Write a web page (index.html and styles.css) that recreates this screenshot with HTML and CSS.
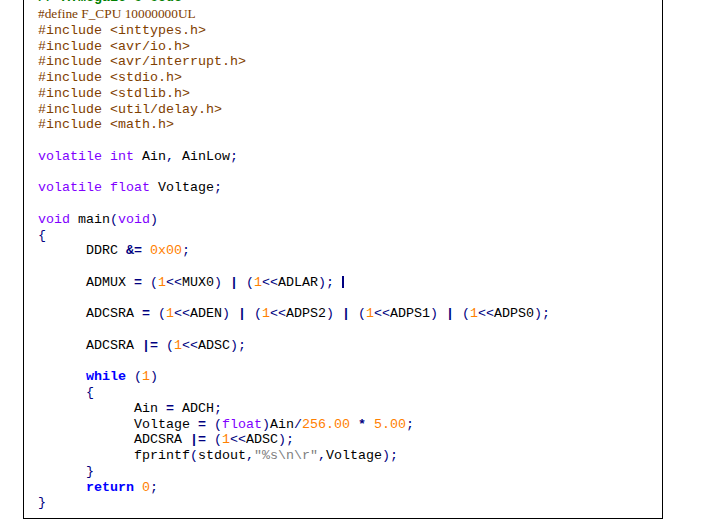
FILE: index.html
```html
<!DOCTYPE html>
<html>
<head>
<meta charset="utf-8">
<link rel="stylesheet" href="styles.css">
</head>
<body>
<div class="doc">
<pre class="code"><span class="cm">// ATmega16 C Code</span>
<span class="def">#define F_CPU 10000000UL</span>
<span class="pp">#include &lt;inttypes.h&gt;</span>
<span class="pp">#include &lt;avr/io.h&gt;</span>
<span class="pp">#include &lt;avr/interrupt.h&gt;</span>
<span class="pp">#include &lt;stdio.h&gt;</span>
<span class="pp">#include &lt;stdlib.h&gt;</span>
<span class="pp">#include &lt;util/delay.h&gt;</span>
<span class="pp">#include &lt;math.h&gt;</span>

<span class="ty">volatile</span> <span class="ty">int</span> Ain<span class="op">,</span> AinLow<span class="op">;</span>

<span class="ty">volatile</span> <span class="ty">float</span> Voltage<span class="op">;</span>

<span class="ty">void</span> main<span class="op">(</span><span class="ty">void</span><span class="op">)</span>
<span class="op">{</span>
	DDRC <span class="ob">&amp;=</span> <span class="nu">0x00</span><span class="op">;</span>

	ADMUX <span class="ob">=</span> <span class="op">(</span><span class="nu">1</span><span class="op">&lt;&lt;</span>MUX0<span class="op">)</span> <span class="ob">|</span> <span class="op">(</span><span class="nu">1</span><span class="op">&lt;&lt;</span>ADLAR<span class="op">);</span> <span class="caret"></span>

	ADCSRA <span class="ob">=</span> <span class="op">(</span><span class="nu">1</span><span class="op">&lt;&lt;</span>ADEN<span class="op">)</span> <span class="ob">|</span> <span class="op">(</span><span class="nu">1</span><span class="op">&lt;&lt;</span>ADPS2<span class="op">)</span> <span class="ob">|</span> <span class="op">(</span><span class="nu">1</span><span class="op">&lt;&lt;</span>ADPS1<span class="op">)</span> <span class="ob">|</span> <span class="op">(</span><span class="nu">1</span><span class="op">&lt;&lt;</span>ADPS0<span class="op">);</span>

	ADCSRA <span class="ob">|=</span> <span class="op">(</span><span class="nu">1</span><span class="op">&lt;&lt;</span>ADSC<span class="op">);</span>

	<span class="kw">while</span> <span class="op">(</span><span class="nu">1</span><span class="op">)</span>
	<span class="op">{</span>
		Ain <span class="ob">=</span> ADCH<span class="op">;</span>
		Voltage <span class="ob">=</span> <span class="op">(</span><span class="ty">float</span><span class="op">)</span>Ain<span class="op">/</span><span class="nu">256.00</span> <span class="ob">*</span> <span class="nu">5.00</span><span class="op">;</span>
		ADCSRA <span class="ob">|=</span> <span class="op">(</span><span class="nu">1</span><span class="op">&lt;&lt;</span>ADSC<span class="op">);</span>
		fprintf<span class="op">(</span>stdout<span class="op">,</span><span class="st">"%s\n\r"</span><span class="op">,</span>Voltage<span class="op">);</span>
	<span class="op">}</span>
	<span class="kw">return</span> <span class="nu">0</span><span class="op">;</span>
<span class="op">}</span></pre>
</div>
</body>
</html>
```

FILE: styles.css
```css
html, body {
  margin: 0;
  padding: 0;
  background: #ffffff;
}

.doc {
  margin-top: -14.6px;
  margin-left: 23px;
  border: 1px solid #000000;
  padding: 4px 0 7px 14px;
  box-sizing: content-box;
  width: 624px;
}

.code {
  margin: 0;
  font-family: "Liberation Mono", "Courier New", monospace;
  font-size: 13.33px;
  line-height: 15.75px;
  tab-size: 6;
  -moz-tab-size: 6;
  color: #000000;
  white-space: pre;
}

.cm { color: #008000; font-weight: bold; }
.def {
  color: #804000;
  font-family: "Liberation Serif", "Times New Roman", serif;
  font-size: 13.33px;
}
.pp { color: #804000; }
.ty { color: #8000ff; }
.kw { color: #0000ff; font-weight: bold; }
.nu { color: #ff8000; }
.op { color: #000080; }
.ob { color: #000080; font-weight: bold; }
.st { color: #808080; }

.caret {
  display: inline-block;
  width: 2px;
  height: 12px;
  background: #000080;
  vertical-align: -2px;
}
```
